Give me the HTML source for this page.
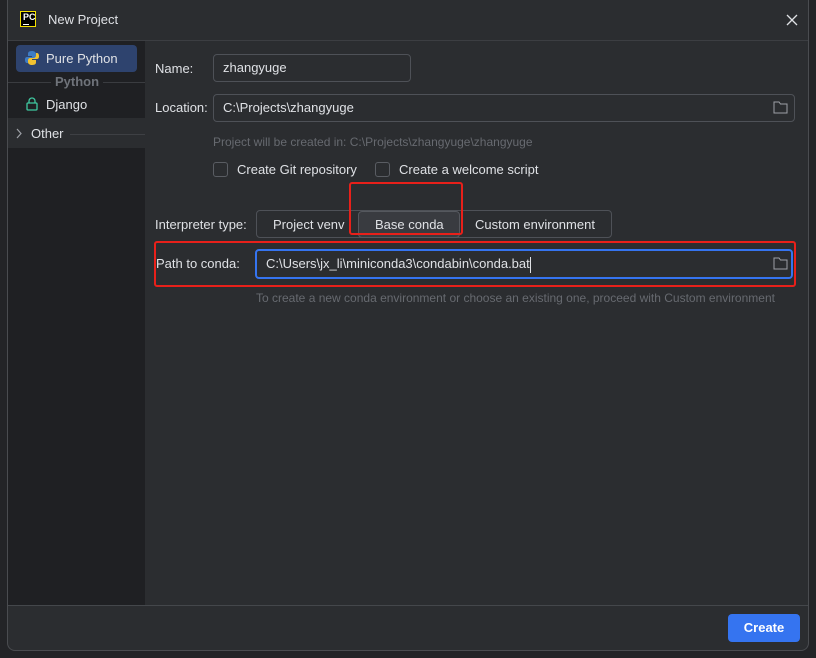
<!DOCTYPE html>
<html><head><style>
*{box-sizing:border-box;margin:0;padding:0}
body{width:816px;height:658px;background:#232427;font-family:"Liberation Sans","DejaVu Sans",sans-serif;font-size:13px;color:#dfe1e5;position:relative;overflow:hidden}
.dlg{position:absolute;left:7px;top:0;width:802px;height:651px;background:#2b2d30;border:1px solid #4a4c50;border-top:none;border-radius:0 0 8px 8px}
.abs{position:absolute}
.in{position:absolute;border:1px solid #4e5157;border-radius:4px;height:28px;padding-left:9px;line-height:26px;color:#dfe1e5}
.cb{position:absolute;width:15px;height:15px;border:1px solid #5a5d63;border-radius:3px}
.red{position:absolute;border:2px solid #e8201a;border-radius:3px}
</style></head><body>
<div class="dlg"></div>
<div class="abs" style="left:20px;top:11px;width:16px;height:16px;border:1px solid #f5e100;background:#000;color:#fff;font-size:9px;font-weight:bold;line-height:11px;padding-left:2px">PC<div style="width:6px;height:1px;background:#fff;margin-top:1px"></div></div>
<div class="abs" style="left:48px;top:12px;font-size:13px">New Project</div>
<svg class="abs" style="left:786px;top:14px" width="12" height="12"><path d="M1 1L11 11M11 1L1 11" stroke="#dfe1e5" stroke-width="1.3"/></svg>
<div class="abs" style="left:8px;top:40px;width:800px;height:1px;background:#3c3e42"></div>
<div class="abs" style="left:8px;top:41px;width:137px;height:564px;background:#1f2023"></div>
<div class="abs" style="left:16px;top:45px;width:121px;height:27px;background:#2e436e;border-radius:4px"></div>
<svg class="abs" style="left:24px;top:50px" width="16" height="16"><path d="M8 1C4 1 4 3 4 4v2h4v1H3C1 7 1 9 1 10c0 2 1 3 2 3h1v-2c0-2 1-3 3-3h3c1 0 2-1 2-2V4c0-2-2-3-4-3z" fill="#3f7cc4"/><path d="M8 15c4 0 4-2 4-3v-2H8V9h5c2 0 2-2 2-3 0-2-1-3-2-3h-1v2c0 2-1 3-3 3H6c-1 0-2 1-2 2v2c0 2 2 3 4 3z" fill="#f2c230"/></svg>
<div class="abs" style="left:46px;top:51px">Pure Python</div>
<div class="abs" style="left:8px;top:82px;width:137px;height:1px;background:#3a3c40"></div>
<div class="abs" style="left:51px;top:74px;padding:0 4px;background:#1f2023;color:#6f737a;font-weight:bold">Python</div>
<svg class="abs" style="left:26px;top:97px" width="12" height="14"><rect x="1" y="6" width="10" height="7" rx="1" fill="none" stroke="#3fc8a0" stroke-width="1.3"/><path d="M3 6V4a3 3 0 0 1 6 0v2" fill="none" stroke="#3fc8a0" stroke-width="1.3"/></svg>
<div class="abs" style="left:46px;top:97px">Django</div>
<div class="abs" style="left:8px;top:118px;width:137px;height:30px;background:#2b2d30"></div>
<svg class="abs" style="left:15px;top:128px" width="8" height="11"><path d="M2 1l4 4.5L2 10" fill="none" stroke="#9da0a6" stroke-width="1.2"/></svg>
<div class="abs" style="left:31px;top:126px">Other</div>
<div class="abs" style="left:70px;top:134px;width:75px;height:1px;background:#3e4044"></div>
<div class="abs" style="left:155px;top:61px">Name:</div>
<div class="in" style="left:213px;top:54px;width:198px">zhangyuge</div>
<div class="abs" style="left:155px;top:100px">Location:</div>
<div class="in" style="left:213px;top:94px;width:582px">C:\Projects\zhangyuge</div>
<svg class="abs" style="left:773px;top:101px" width="15" height="13"><path d="M1 1h5l1.5 2H14v9H1z" fill="none" stroke="#9da0a6"/></svg>
<div class="abs" style="left:213px;top:135px;font-size:12px;color:#676a70">Project will be created in: C:\Projects\zhangyuge\zhangyuge</div>
<div class="cb" style="left:213px;top:162px"></div>
<div class="abs" style="left:237px;top:162px">Create Git repository</div>
<div class="cb" style="left:375px;top:162px"></div>
<div class="abs" style="left:399px;top:162px">Create a welcome script</div>
<div class="abs" style="left:155px;top:217px">Interpreter type:</div>
<div class="abs" style="left:256px;top:210px;width:356px;height:28px;border:1px solid #4e5157;border-radius:4px"></div>
<div class="abs" style="left:273px;top:217px">Project venv</div>
<div class="abs" style="left:358px;top:211px;width:102px;height:27px;background:#393b40;border:1px solid #55585e;border-radius:4px"></div>
<div class="abs" style="left:375px;top:217px">Base conda</div>
<div class="abs" style="left:475px;top:217px">Custom environment</div>
<div class="red" style="left:349px;top:182px;width:114px;height:53px"></div>
<div class="abs" style="left:156px;top:256px">Path to conda:</div>
<div class="in" style="left:255px;top:249px;width:538px;height:30px;border:2px solid #3574f0;line-height:26px">C:\Users\jx_li\miniconda3\condabin\conda.bat<span style="display:inline-block;width:1px;height:16px;background:#dfe1e5;vertical-align:middle"></span></div>
<svg class="abs" style="left:773px;top:257px" width="15" height="13"><path d="M1 1h5l1.5 2H14v9H1z" fill="none" stroke="#9da0a6"/></svg>
<div class="red" style="left:154px;top:241px;width:642px;height:46px"></div>
<div class="abs" style="left:256px;top:291px;font-size:12px;color:#676a70">To create a new conda environment or choose an existing one, proceed with Custom environment</div>
<div class="abs" style="left:8px;top:605px;width:800px;height:1px;background:#44474b"></div>
<div class="abs" style="left:728px;top:614px;width:72px;height:28px;background:#3574f0;border-radius:4px;color:#fff;font-weight:bold;text-align:center;line-height:28px">Create</div>
</body></html>
